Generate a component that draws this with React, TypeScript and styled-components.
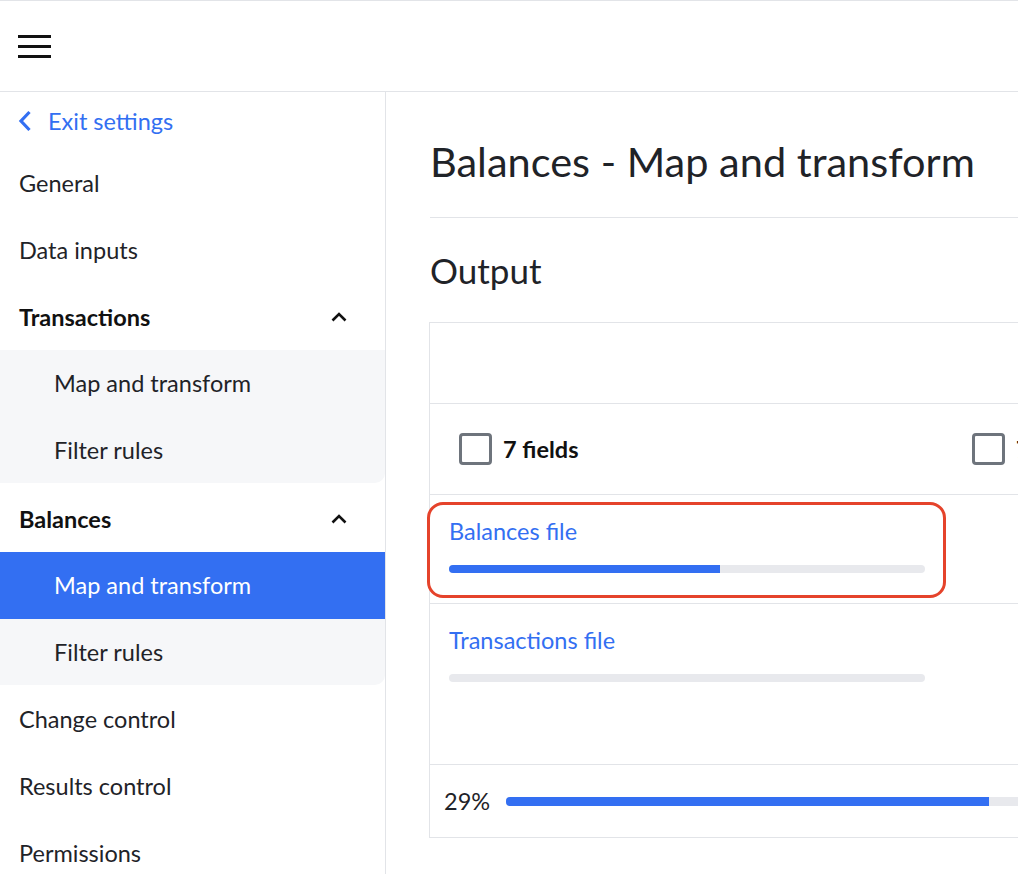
import styled, { createGlobalStyle } from "styled-components"

const FONT = `"Lato", "Liberation Sans", sans-serif`
const BLUE = "#336ff2"
const LINE = "#e2e4e8"

const GlobalStyle = createGlobalStyle`
  html, body {
    margin: 0;
    padding: 0;
    background: #fff;
    overflow: hidden;
  }
  body {
    font-family: ${FONT};
    color: #1f2328;
  }
  * {
    box-sizing: border-box;
  }
`

const Page = styled.div`
  width: 1018px;
  height: 874px;
  display: flex;
  flex-direction: column;
  overflow: hidden;
`

const TopBar = styled.header`
  height: 92px;
  flex: none;
  display: flex;
  align-items: center;
  padding-left: 18px;
  border-top: 1px solid ${LINE};
  border-bottom: 1px solid ${LINE};
`

const MenuButton = styled.button`
  border: none;
  background: none;
  padding: 0;
  display: flex;
  flex-direction: column;
  gap: 7px;
  width: 33px;
  cursor: pointer;

  span {
    height: 3px;
    background: #111;
  }
`

const Body = styled.div`
  flex: 1;
  display: flex;
  min-height: 0;
`

const Sidebar = styled.nav`
  width: 386px;
  flex: none;
  border-right: 1px solid ${LINE};
  display: flex;
  flex-direction: column;
`

const ExitLink = styled.a`
  height: 57px;
  flex: none;
  display: flex;
  align-items: center;
  gap: 16px;
  padding-left: 18px;
  color: ${BLUE};
  font-size: 23.5px;
  text-decoration: none;
`

const NavItem = styled.div<{ $bold?: boolean }>`
  height: 67px;
  flex: none;
  display: flex;
  align-items: center;
  justify-content: space-between;
  padding: 0 38px 0 19px;
  font-size: 23.5px;
  font-weight: ${p => (p.$bold ? 700 : 400)};
  color: ${p => (p.$bold ? "#111" : "#1f2328")};
`

const SubGroup = styled.div<{ $gap?: number }>`
  flex: none;
  background: #f6f7f9;
  border-bottom-right-radius: 10px;
  margin-bottom: ${p => p.$gap ?? 0}px;
  overflow: hidden;
`

const SubItem = styled.div<{ $active?: boolean }>`
  height: 66.5px;
  display: flex;
  align-items: center;
  padding-left: 54px;
  font-size: 23.5px;
  background: ${p => (p.$active ? BLUE : "transparent")};
  color: ${p => (p.$active ? "#fff" : "#1f2328")};
`

const Main = styled.main`
  flex: 1;
  min-width: 0;
  padding: 45px 0 0 44px;
  overflow: hidden;
`

const Title = styled.h1`
  margin: 0;
  font-size: 41.5px;
  line-height: 48px;
  font-weight: 400;
  color: #1f2328;
  white-space: nowrap;
  padding-bottom: 32px;
  border-bottom: 1px solid ${LINE};
`

const SectionTitle = styled.h2`
  margin: 32px 0 32px;
  font-size: 35px;
  line-height: 40px;
  font-weight: 400;
  color: #1f2328;
`

const Table = styled.div`
  width: 760px;
  margin-left: -1px;
  border: 1px solid ${LINE};
  display: flex;
  flex-direction: column;
`

const Row = styled.div<{ $height: number }>`
  height: ${p => p.$height}px;
  flex: none;
  border-bottom: 1px solid ${LINE};

  &:last-child {
    border-bottom: none;
  }
`

const FieldsRow = styled(Row)`
  display: grid;
  grid-template-columns: 513px 1fr;
  align-items: center;
`

const CheckLabel = styled.label`
  display: flex;
  align-items: center;
  gap: 11px;
  padding-left: 29px;
  font-size: 23.5px;
  font-weight: 700;
  color: #111;
  white-space: nowrap;
`

const CheckBox = styled.span`
  width: 33px;
  height: 32px;
  border: 3px solid #6e747c;
  border-radius: 4px;
  flex: none;
`

const FileRow = styled(Row)`
  padding-top: 7px;
`

const Highlight = styled.div`
  width: 519px;
  margin-left: -3px;
  border: 3px solid #e5432b;
  border-radius: 16px;
  padding: 12px 19px 22px;
`

const FileBlock = styled.div`
  width: 516px;
  padding: 22px 19px 0;
`

const FileLink = styled.a`
  display: block;
  font-size: 23.5px;
  line-height: 28px;
  color: ${BLUE};
  text-decoration: none;
`

const Track = styled.div<{ $width: number }>`
  height: 8px;
  width: ${p => p.$width}px;
  flex: none;
  border-radius: 4px;
  background: #e8e9ed;
  overflow: hidden;
`

const FileTrack = styled(Track)`
  margin-top: 20px;
`

const Fill = styled.div`
  height: 100%;
  background: ${BLUE};
`

const TotalRow = styled(Row)`
  display: flex;
  align-items: center;
  gap: 16px;
  padding-left: 14px;
  font-size: 23.5px;
  color: #1f2328;
`

const TotalTrack = styled(Track)`
  height: 9px;
`

const ChevronUp = () => (
  <svg width="16" height="10" viewBox="0 0 16 10" fill="none">
    <path d="M1.5 8.5L8 2L14.5 8.5" stroke="#111" strokeWidth="2.6" />
  </svg>
)

const ChevronLeft = () => (
  <svg width="14" height="22" viewBox="0 0 14 22" fill="none">
    <path d="M11.5 2L3 11L11.5 20" stroke={BLUE} strokeWidth="3.2" />
  </svg>
)

const App = () => {
  return (
    <>
      <GlobalStyle />
      <Page>
        <TopBar>
          <MenuButton aria-label="Menu">
            <span />
            <span />
            <span />
          </MenuButton>
        </TopBar>
        <Body>
          <Sidebar>
            <ExitLink href="#">
              <ChevronLeft />
              Exit settings
            </ExitLink>
            <NavItem>General</NavItem>
            <NavItem>Data inputs</NavItem>
            <NavItem $bold>
              Transactions
              <ChevronUp />
            </NavItem>
            <SubGroup $gap={2}>
              <SubItem>Map and transform</SubItem>
              <SubItem>Filter rules</SubItem>
            </SubGroup>
            <NavItem $bold>
              Balances
              <ChevronUp />
            </NavItem>
            <SubGroup>
              <SubItem $active>Map and transform</SubItem>
              <SubItem>Filter rules</SubItem>
            </SubGroup>
            <NavItem>Change control</NavItem>
            <NavItem>Results control</NavItem>
            <NavItem>Permissions</NavItem>
          </Sidebar>
          <Main>
            <Title>Balances - Map and transform</Title>
            <SectionTitle>Output</SectionTitle>
            <Table>
              <Row $height={81} />
              <FieldsRow $height={91}>
                <CheckLabel>
                  <CheckBox />7 fields
                </CheckLabel>
                <CheckLabel>
                  <CheckBox />7 fields
                </CheckLabel>
              </FieldsRow>
              <FileRow $height={109}>
                <Highlight>
                  <FileLink href="#">Balances file</FileLink>
                  <FileTrack $width={476}>
                    <Fill style={{ width: "57%" }} />
                  </FileTrack>
                </Highlight>
              </FileRow>
              <Row $height={161}>
                <FileBlock>
                  <FileLink href="#">Transactions file</FileLink>
                  <FileTrack $width={476}>
                    <Fill style={{ width: "0%" }} />
                  </FileTrack>
                </FileBlock>
              </Row>
              <TotalRow $height={72}>
                29%
                <TotalTrack $width={560}>
                  <Fill style={{ width: "86.3%" }} />
                </TotalTrack>
              </TotalRow>
            </Table>
          </Main>
        </Body>
      </Page>
    </>
  )
}

export default App
